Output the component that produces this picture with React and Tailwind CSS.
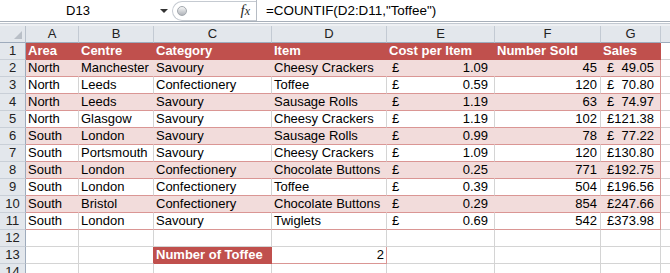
import React from 'react';

const data = [
  ['North', 'Manchester', 'Savoury', 'Cheesy Crackers', '1.09', '45', '49.05'],
  ['North', 'Leeds', 'Confectionery', 'Toffee', '0.59', '120', '70.80'],
  ['North', 'Leeds', 'Savoury', 'Sausage Rolls', '1.19', '63', '74.97'],
  ['North', 'Glasgow', 'Savoury', 'Cheesy Crackers', '1.19', '102', '121.38'],
  ['South', 'London', 'Savoury', 'Sausage Rolls', '0.99', '78', '77.22'],
  ['South', 'Portsmouth', 'Savoury', 'Cheesy Crackers', '1.09', '120', '130.80'],
  ['South', 'London', 'Confectionery', 'Chocolate Buttons', '0.25', '771', '192.75'],
  ['South', 'London', 'Confectionery', 'Toffee', '0.39', '504', '196.56'],
  ['South', 'Bristol', 'Confectionery', 'Chocolate Buttons', '0.29', '854', '247.66'],
  ['South', 'London', 'Savoury', 'Twiglets', '0.69', '542', '373.98'],
];

const headings = ['Area', 'Centre', 'Category', 'Item', 'Cost per Item', 'Number Sold', 'Sales'];
const widths = ['w-[53px]', 'w-[75px]', 'w-[118px]', 'w-[115px]', 'w-[108px]', 'w-[106px]', 'w-[60px]'];
const letters = ['A', 'B', 'C', 'D', 'E', 'F', 'G'];

const base = 'h-[17px] shrink-0 border-r border-b overflow-hidden whitespace-nowrap leading-[16px] flex items-center';

function RowHead({ n }) {
  return (
    <div className="flex h-[17px] w-[26px] shrink-0 items-center justify-center border-r border-b border-r-[#9eabbc] border-b-[#c9cfd7] bg-[#e3e7ec] text-[13px] leading-[16px] text-[#222]">
      {n}
    </div>
  );
}

function Filler({ border = 'border-b-[#d4d4d4]', bg = 'bg-white' }) {
  return <div className={`h-[17px] flex-1 border-b ${border} ${bg}`} />;
}

function Money({ value }) {
  return (
    <div className="flex w-full justify-between pl-[5px] pr-[6px]">
      <span>£</span>
      <span>{value}</span>
    </div>
  );
}

function DataRow({ n, row, pink }) {
  const fill = pink ? 'bg-[#f2dcdb] border-r-[#f2dcdb]' : 'bg-white border-r-[#d4d4d4]';
  const cls = `${base} ${fill} border-b-[#da9694]`;
  return (
    <div className="flex">
      <RowHead n={n} />
      <div className={`${cls} ${widths[0]} pl-[2px]`}>{row[0]}</div>
      <div className={`${cls} ${widths[1]} pl-[2px]`}>{row[1]}</div>
      <div className={`${cls} ${widths[2]} pl-[2px]`}>{row[2]}</div>
      <div className={`${cls} ${widths[3]} pl-[2px]`}>{row[3]}</div>
      <div className={`${cls} ${widths[4]}`}><Money value={row[4]} /></div>
      <div className={`${cls} ${widths[5]} justify-end pr-[3px]`}>{row[5]}</div>
      <div className={`${base} ${widths[6]} ${pink ? 'bg-[#f2dcdb]' : 'bg-white'} border-r-[#da9694] border-b-[#da9694]`}>
        <div className="flex w-full justify-between pl-[6px] pr-[6px]">
          <span>£</span>
          <span>{row[6]}</span>
        </div>
      </div>
      <Filler />
    </div>
  );
}

function EmptyRow({ n, children }) {
  return (
    <div className="flex">
      <RowHead n={n} />
      {children ||
        widths.map((w, i) => (
          <div key={i} className={`${base} ${w} border-r-[#d4d4d4] border-b-[#d4d4d4] bg-white`} />
        ))}
      <Filler />
    </div>
  );
}

export default function App() {
  return (
    <div className="h-[273px] w-[670px] overflow-hidden bg-white font-['Liberation_Sans',Arial,sans-serif] text-[13px] text-black">
      {/* formula bar */}
      <div className="flex h-[22px] items-center border-b border-[#a7afb9] bg-white">
        <div className="w-[156px] text-center leading-[16px]">D13</div>
        <div className="flex w-[16px] justify-center">
          <div className="h-0 w-0 border-x-[4px] border-t-[4px] border-x-transparent border-t-[#333]" />
        </div>
        <div className="flex h-[20px] w-[84px] items-center rounded-l-[11px] border border-r-0 border-[#c5cad1] bg-white">
          <div className="ml-[4px] h-[10px] w-[10px] rounded-full border border-[#a3a8ae] bg-gradient-to-b from-[#f6f6f6] to-[#b0b4ba]" />
          <span className="ml-auto pr-[6px] font-['Liberation_Serif',serif] text-[15px] italic leading-none text-[#2a2a2a]">
            f<span className="text-[12px]">x</span>
          </span>
        </div>
        <div className="h-full border-l border-[#b6bcc4]" />
        <div className="pl-[9px] text-[13.4px] leading-[16px]">=COUNTIF(D2:D11,"Toffee")</div>
      </div>
      <div className="h-px bg-white" />
      <div className="h-px bg-[#c3c9d1]" />
      <div className="h-[2px] bg-[#eef0f3]" />

      {/* column letters */}
      <div className="flex">
        <div className="relative h-[17px] w-[26px] shrink-0 border-r border-b border-r-[#b9c1cb] border-b-[#9eabbc] bg-[#e3e7ec]">
          <svg className="absolute right-[3px] bottom-[3px]" width="8" height="8" viewBox="0 0 8 8">
            <polygon points="8,0 8,8 0,8" fill="#b9bfc7" />
          </svg>
        </div>
        {letters.map((l, i) => (
          <div
            key={l}
            className={`${base} ${widths[i]} justify-center border-r-[#c3cad3] border-b-[#9eabbc] bg-[#e3e7ec] text-[#222]`}
          >
            {l}
          </div>
        ))}
        <div className="h-[17px] flex-1 border-b border-b-[#9eabbc] bg-[#e3e7ec]" />
      </div>

      {/* table heading row */}
      <div className="flex">
        <RowHead n={1} />
        {headings.map((h, i) => (
          <div
            key={h}
            className={`${base} ${widths[i]} border-r-[#c0504d] border-b-[#c0504d] bg-[#c0504d] pl-[2px] font-bold text-white`}
          >
            {h}
          </div>
        ))}
        <Filler />
      </div>

      {data.map((row, i) => (
        <DataRow key={i} n={i + 2} row={row} pink={i % 2 === 0} />
      ))}

      <EmptyRow n={12} />
      <EmptyRow n={13}>
        <div className={`${base} ${widths[0]} border-r-[#d4d4d4] border-b-[#d4d4d4] bg-white`} />
        <div className={`${base} ${widths[1]} border-r-[#c0504d] border-b-[#d4d4d4] bg-white`} />
        <div className={`${base} ${widths[2]} border-r-[#c0504d] border-b-[#c0504d] bg-[#c0504d] pl-[2px] font-bold text-white`}>
          Number of Toffee
        </div>
        <div className={`${base} ${widths[3]} relative justify-end border-r-[#da9694] border-b-[#da9694] bg-white pr-[2px]`}>
          <div className="absolute top-[-1px] right-0 left-0 h-px bg-[#da9694]" />
          2
        </div>
        <div className={`${base} ${widths[4]} border-r-[#d4d4d4] border-b-[#d4d4d4] bg-white`} />
        <div className={`${base} ${widths[5]} border-r-[#d4d4d4] border-b-[#d4d4d4] bg-white`} />
        <div className={`${base} ${widths[6]} border-r-[#d4d4d4] border-b-[#d4d4d4] bg-white`} />
      </EmptyRow>
      <EmptyRow n={14} />
    </div>
  );
}
